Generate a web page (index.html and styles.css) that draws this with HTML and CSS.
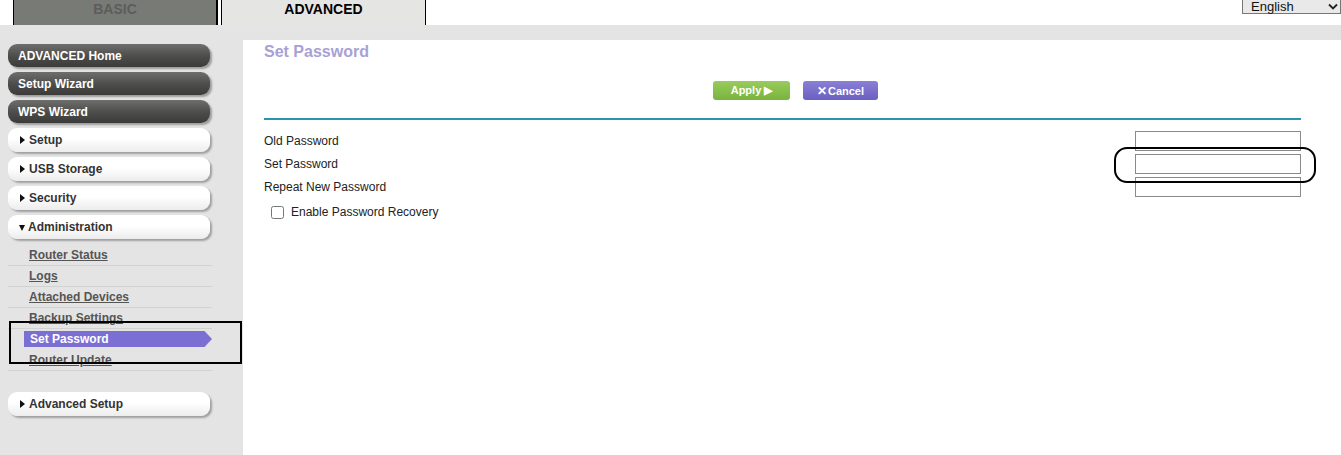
FILE: index.html
```html
<!DOCTYPE html>
<html lang="en">
  <head>
    <meta charset="UTF-8" />
    <link rel="stylesheet" href="styles.css">
    <title>NETGEAR Router | Set Password</title>
  </head>
  <body>
    <div class="top">
      <div class="tabs">
        <div class="tab basic">BASIC</div>
        <div class="tab advanced">ADVANCED</div>
      </div>
      <div class="lang">
        <span>English</span>
        <svg class="chev" width="10" height="7" viewBox="0 0 10 7"><path d="M1 1.5 L5 5.5 L9 1.5" fill="none" stroke="#222" stroke-width="1.8"/></svg>
      </div>
    </div>

    <div class="page">
      <div class="sidebar">
        <div class="menu-btn dark">ADVANCED Home</div>
        <div class="menu-btn dark">Setup Wizard</div>
        <div class="menu-btn dark">WPS Wizard</div>
        <div class="menu-btn light"><span class="tri right"></span>Setup</div>
        <div class="menu-btn light"><span class="tri right"></span>USB Storage</div>
        <div class="menu-btn light"><span class="tri right"></span>Security</div>
        <div class="menu-btn light"><span class="tri down"></span>Administration</div>
        <ul class="submenu">
          <li><a href="#">Router Status</a></li>
          <li><a href="#">Logs</a></li>
          <li><a href="#">Attached Devices</a></li>
          <li><a href="#">Backup Settings</a></li>
          <li class="active"><span>Set Password</span></li>
          <li><a href="#">Router Update</a></li>
        </ul>
        <div class="menu-btn light adv-setup"><span class="tri right"></span>Advanced Setup</div>
        <div class="mark-box"></div>
      </div>

      <div class="content">
        <h1 class="title">Set Password</h1>
        <div class="actions">
          <button class="btn apply">Apply &#9654;</button>
          <button class="btn cancel"><b class="x">&#10005;</b>Cancel</button>
        </div>
        <div class="rule"></div>
        <div class="form">
          <div class="row">
            <label>Old Password</label>
            <input type="password" class="field">
          </div>
          <div class="row">
            <label>Set Password</label>
            <div class="field-wrap">
              <input type="password" class="field">
              <div class="mark-round"></div>
            </div>
          </div>
          <div class="row">
            <label>Repeat New Password</label>
            <input type="password" class="field">
          </div>
          <div class="check-row">
            <input type="checkbox" id="recovery">
            <label for="recovery">Enable Password Recovery</label>
          </div>
        </div>
      </div>
    </div>
  </body>
</html>
```

FILE: styles.css
```css
* {
  box-sizing: border-box;
}

body {
  margin: 0;
  font-family: "Liberation Sans", Arial, sans-serif;
  font-size: 12px;
  color: #222;
  background: #fff;
  height: 455px;
  overflow: hidden;
  position: relative;
}

.top {
  height: 25px;
  display: flex;
  justify-content: space-between;
  background: #fff;
}

.tabs {
  display: flex;
  padding-left: 13px;
}

.tab {
  width: 205px;
  height: 25px;
  border-left: 1px solid #000;
  border-right: 2px solid #000;
  text-align: center;
  font-size: 14px;
  font-weight: bold;
  line-height: 19px;
}

.tab.basic {
  background: #787a76;
  color: #5c5d5a;
}

.tab.advanced {
  background: #e5e5e3;
  color: #000;
  margin-left: 3px;
  width: 205px;
  border-right-width: 1px;
}

.lang {
  width: 99px;
  height: 14px;
  background: #e9e9e9;
  border: 1px solid #777;
  border-top: none;
  display: flex;
  align-items: center;
  justify-content: space-between;
  padding: 0 2px 0 8px;
  font-size: 13px;
  color: #111;
  line-height: 12px;
}

.page {
  display: flex;
  background: #e4e4e4;
  height: 430px;
}

.sidebar {
  width: 243px;
  flex: none;
  padding: 19px 0 0 8px;
}

.menu-btn {
  width: 202px;
  border-radius: 9px;
  font-weight: bold;
  display: flex;
  align-items: center;
}

.menu-btn.dark {
  height: 23px;
  margin-bottom: 5px;
  padding-left: 10px;
  color: #fff;
  background: linear-gradient(#6e6e6c, #4c4c4a 55%, #3b3b3a);
  box-shadow: 2px 2px 2px #9c9c9c;
}

.menu-btn.light {
  height: 24px;
  margin-bottom: 5px;
  padding-left: 11px;
  color: #333;
  background: linear-gradient(#ffffff 45%, #ececec);
  box-shadow: 2px 2px 2px #a0a0a0;
}

.tri {
  width: 0;
  height: 0;
  margin-right: 4px;
}

.tri.right {
  border-top: 4px solid transparent;
  border-bottom: 4px solid transparent;
  border-left: 5px solid #111;
  margin-left: 1px;
}

.tri.down {
  border-left: 3.5px solid transparent;
  border-right: 3.5px solid transparent;
  border-top: 6px solid #111;
  margin-right: 3px;
  margin-top: 1px;
}

.submenu {
  list-style: none;
  margin: 0;
  padding: 1px 0 0;
  width: 204px;
}

.submenu li {
  height: 21px;
  border-bottom: 1px solid #d2d2d2;
  display: flex;
  align-items: center;
  padding-left: 21px;
  font-weight: bold;
}

.submenu a {
  color: #555;
}

.submenu li.active {
  border-bottom-color: transparent;
  padding-left: 16px;
}

.submenu li.active span {
  display: block;
  width: 188px;
  height: 16px;
  line-height: 16px;
  padding-left: 6px;
  color: #fff;
  background: #7b6fd3;
  clip-path: polygon(0 0, 96% 0, 100% 50%, 96% 100%, 0 100%);
}

.menu-btn.adv-setup {
  margin-top: 21px;
}

.mark-box {
  position: absolute;
  left: 9px;
  top: 321px;
  width: 233px;
  height: 43px;
  border: 2px solid #000;
}

.content {
  flex: 1;
  background: #fff;
  margin-top: 15px;
  padding: 0 40px 0 21px;
}

.title {
  margin: 2px 0 0;
  font-size: 16px;
  line-height: 20px;
  color: #a9a1d4;
}

.actions {
  display: flex;
  justify-content: center;
  gap: 13px;
  padding-left: 26px;
  margin-top: 19px;
}

.btn {
  height: 19px;
  border: none;
  border-radius: 3px;
  color: #fff;
  font-family: inherit;
  font-weight: bold;
  font-size: 11px;
  padding: 0;
}

.btn.apply {
  width: 77px;
  background: linear-gradient(#98cb5c, #7ab33f);
}

.btn.cancel {
  width: 75px;
  background: linear-gradient(#8a80d6, #6b5fc0);
}

.btn .x {
  font-size: 12px;
  margin-right: 1px;
}

.rule {
  height: 2px;
  background: #2c94ae;
  margin-top: 18px;
}

.form {
  padding-top: 9px;
}

.row {
  display: flex;
  justify-content: space-between;
  align-items: center;
  height: 23px;
}

.field {
  width: 166px;
  height: 20px;
  border: 1px solid #8a8a8a;
  margin: 0;
}

.field-wrap {
  position: relative;
  height: 20px;
}

.mark-round {
  position: absolute;
  left: -21px;
  top: -7px;
  width: 202px;
  height: 36px;
  border: 2px solid #000;
  border-radius: 13px;
}

.check-row {
  display: flex;
  align-items: center;
  margin-top: 7px;
  padding-left: 7px;
}

.check-row input {
  width: 13px;
  height: 13px;
  margin: 0 7px 0 0;
}
```
